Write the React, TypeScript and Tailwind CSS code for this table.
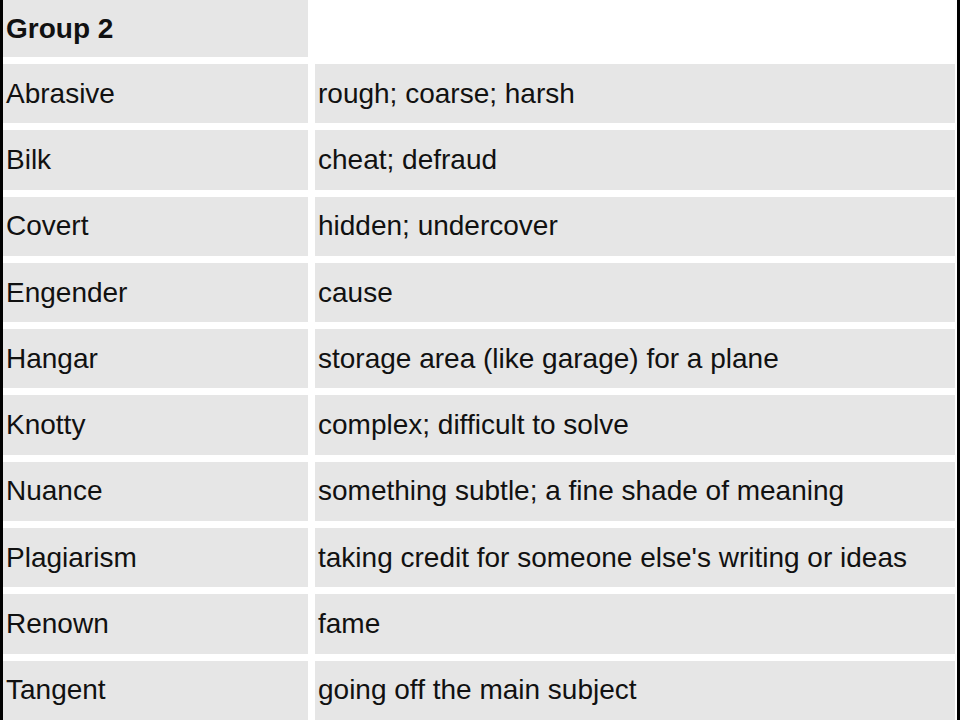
import React from "react";

// Liste des mots du groupe 2 avec leur définition
interface WordEntry {
  word: string;
  meaning: string;
}

const words: WordEntry[] = [
  { word: "Abrasive", meaning: "rough; coarse; harsh" },
  { word: "Bilk", meaning: "cheat; defraud" },
  { word: "Covert", meaning: "hidden; undercover" },
  { word: "Engender", meaning: "cause" },
  { word: "Hangar", meaning: "storage area (like garage) for a plane" },
  { word: "Knotty", meaning: "complex; difficult to solve" },
  { word: "Nuance", meaning: "something subtle; a fine shade of meaning" },
  { word: "Plagiarism", meaning: "taking credit for someone else's writing or ideas" },
  { word: "Renown", meaning: "fame" },
  { word: "Tangent", meaning: "going off the main subject" },
];

export default function App() {
  return (
    <main
      className="w-[960px] h-[720px] overflow-hidden bg-white border-l-[3px] border-r-[3px] border-black text-[28px] text-[#111] leading-none"
      style={{ fontFamily: '"Liberation Sans", Arial, sans-serif' }}
    >
      <div className="grid grid-cols-[305px_640px] gap-[7px] auto-rows-[59.3px] grid-rows-[57px]">
        {/* En-tête */}
        <div className="bg-[#e6e6e6] flex items-center pl-[3px] font-bold">Group 2</div>
        <div className="bg-white" />

        {words.map((entry) => (
          <React.Fragment key={entry.word}>
            <div className="bg-[#e6e6e6] flex items-center pl-[3px]">{entry.word}</div>
            <div className="bg-[#e6e6e6] flex items-center pl-[3px]">{entry.meaning}</div>
          </React.Fragment>
        ))}
      </div>
    </main>
  );
}
